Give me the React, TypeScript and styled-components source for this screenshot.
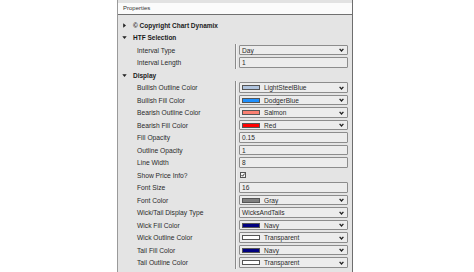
import React from "react";
import styled, { createGlobalStyle } from "styled-components";

const GlobalStyle = createGlobalStyle`
  html, body {
    margin: 0;
    padding: 0;
    background: #ffffff;
  }
  body {
    font-family: "Liberation Sans", Arial, sans-serif;
    color: #1e1e1e;
  }
`;

const Panel = styled.div`
  margin-left: 117px;
  width: 236px;
  height: 272px;
  box-sizing: border-box;
  border-left: 1px solid #9a9a9a;
  border-right: 1px solid #6e6e6e;
  background: #e4e4e4;
  overflow: hidden;
`;

const TitleBar = styled.div`
  height: 15px;
  box-sizing: border-box;
  background: #fbfbfb;
  border-top: 3px solid #e2e2e2;
  border-bottom: 1px solid #707070;
  padding-left: 5px;
  font-size: 6px;
  line-height: 11px;
  color: #333;
`;

const List = styled.div`
  padding-top: 3.75px;
`;

const HeaderRow = styled.div`
  height: 12.5px;
  display: flex;
  align-items: center;
  padding-left: 4px;
  gap: 6px;
  font-size: 6.5px;
  font-weight: bold;
  color: #1a1a1a;
`;

const Arrow = styled.svg`
  width: 5px;
  height: 5px;
  flex: none;
`;

const Row = styled.div`
  height: 12.5px;
  display: grid;
  grid-template-columns: 117px 1px 1px 1fr;
  align-items: stretch;
`;

const Label = styled.div`
  padding-left: 19px;
  font-size: 6.7px;
  display: flex;
  align-items: center;
  color: #2a2a2a;
`;

const Divider = styled.div<{ $tone: string }>`
  background: ${(p) => p.$tone};
`;

const ValueCell = styled.div`
  display: flex;
  align-items: center;
  padding: 0 4px 0 2px;
`;

const Field = styled.div`
  flex: 1;
  height: 10.5px;
  box-sizing: border-box;
  border: 1px solid #8c8c8c;
  border-radius: 1px;
  background: #ececec;
  display: flex;
  align-items: center;
  padding: 0 3px 0 2px;
  font-size: 6.6px;
  color: #2a2a2a;
`;

const Swatch = styled.span<{ $color: string }>`
  width: 18px;
  height: 5px;
  flex: none;
  box-sizing: border-box;
  border: 1px solid #555;
  background: ${(p) => p.$color};
  margin-right: 4px;
`;

const FieldText = styled.span`
  flex: 1;
  white-space: nowrap;
`;

const Chevron = styled.svg`
  width: 5px;
  height: 4px;
  flex: none;
`;

const CheckBox = styled.div`
  width: 6px;
  height: 6px;
  box-sizing: border-box;
  border: 1px solid #555;
  background: #f4f4f4;
  margin-left: 1px;
  display: flex;
  align-items: center;
  justify-content: center;
`;

type Value =
  | { kind: "text"; text: string }
  | { kind: "select"; text: string; color?: string }
  | { kind: "check" };

type Item =
  | { type: "header"; title: string; open: boolean }
  | { type: "prop"; label: string; value: Value };

const items: Item[] = [
  { type: "header", title: "© Copyright Chart Dynamix", open: false },
  { type: "header", title: "HTF Selection", open: true },
  { type: "prop", label: "Interval Type", value: { kind: "select", text: "Day" } },
  { type: "prop", label: "Interval Length", value: { kind: "text", text: "1" } },
  { type: "header", title: "Display", open: true },
  { type: "prop", label: "Bullish Outline Color", value: { kind: "select", text: "LightSteelBlue", color: "#b0c4de" } },
  { type: "prop", label: "Bullish Fill Color", value: { kind: "select", text: "DodgerBlue", color: "#1e90ff" } },
  { type: "prop", label: "Bearish Outline Color", value: { kind: "select", text: "Salmon", color: "#fa8072" } },
  { type: "prop", label: "Bearish Fill Color", value: { kind: "select", text: "Red", color: "#ff0000" } },
  { type: "prop", label: "Fill Opacity", value: { kind: "text", text: "0.15" } },
  { type: "prop", label: "Outline Opacity", value: { kind: "text", text: "1" } },
  { type: "prop", label: "Line Width", value: { kind: "text", text: "8" } },
  { type: "prop", label: "Show Price Info?", value: { kind: "check" } },
  { type: "prop", label: "Font Size", value: { kind: "text", text: "16" } },
  { type: "prop", label: "Font Color", value: { kind: "select", text: "Gray", color: "#808080" } },
  { type: "prop", label: "Wick/Tail Display Type", value: { kind: "select", text: "WicksAndTails" } },
  { type: "prop", label: "Wick Fill Color", value: { kind: "select", text: "Navy", color: "#000080" } },
  { type: "prop", label: "Wick Outline Color", value: { kind: "select", text: "Transparent", color: "#ffffff" } },
  { type: "prop", label: "Tail Fill Color", value: { kind: "select", text: "Navy", color: "#000080" } },
  { type: "prop", label: "Tail Outline Color", value: { kind: "select", text: "Transparent", color: "#ffffff" } },
];

const ValueField: React.FC<{ value: Value }> = ({ value }) => {
  if (value.kind === "check") {
    return (
      <CheckBox>
        <svg width="4" height="4" viewBox="0 0 4 4">
          <polyline points="0.5,2 1.6,3.2 3.6,0.6" fill="none" stroke="#222" strokeWidth="0.9" />
        </svg>
      </CheckBox>
    );
  }
  return (
    <Field>
      {value.kind === "select" && value.color && <Swatch $color={value.color} />}
      <FieldText>{value.text}</FieldText>
      {value.kind === "select" && (
        <Chevron viewBox="0 0 5 4">
          <polyline points="0.6,0.8 2.5,3 4.4,0.8" fill="none" stroke="#222" strokeWidth="1.3" />
        </Chevron>
      )}
    </Field>
  );
};

const App: React.FC = () => {
  return (
    <>
      <GlobalStyle />
      <Panel>
        <TitleBar>Properties</TitleBar>
        <List>
          {items.map((item, i) =>
            item.type === "header" ? (
              <HeaderRow key={i}>
                <Arrow viewBox="0 0 5 5">
                  {item.open ? (
                    <polygon points="0.3,1.2 4.7,1.2 2.5,4" fill="#222" />
                  ) : (
                    <polygon points="1.2,0.3 4,2.5 1.2,4.7" fill="#222" />
                  )}
                </Arrow>
                {item.title}
              </HeaderRow>
            ) : (
              <Row key={i}>
                <Label>{item.label}</Label>
                <Divider $tone="#8a8a8a" />
                <Divider $tone="#f2f2f2" />
                <ValueCell>
                  <ValueField value={item.value} />
                </ValueCell>
              </Row>
            )
          )}
        </List>
      </Panel>
    </>
  );
};

export default App;
